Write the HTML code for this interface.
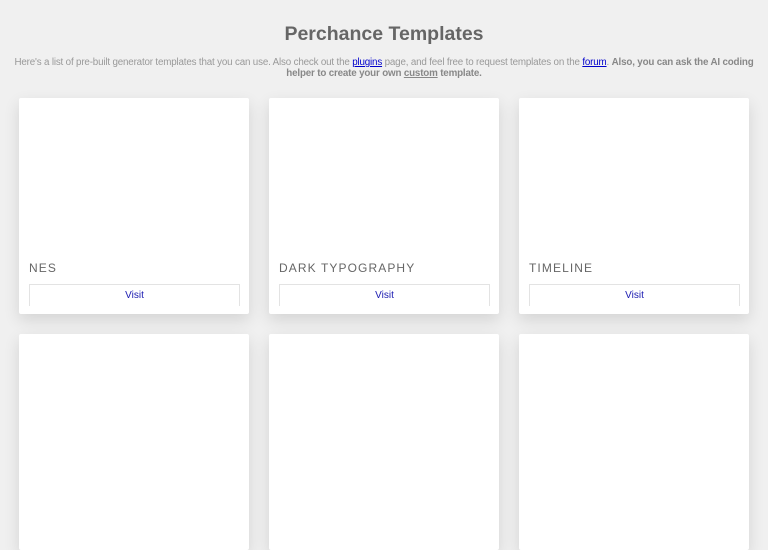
<!DOCTYPE html>
<html><head><style>
body{margin:0;background:#f0f0f0;font-family:"Liberation Sans",sans-serif;width:768px;height:480px;overflow:hidden;position:relative}
h1{position:absolute;top:22px;left:0;width:768px;text-align:center;margin:0;font-size:19.5px;font-weight:bold;color:#666;line-height:24px}
.intro{position:absolute;top:57px;left:0;width:768px;text-align:center;font-size:9.8px;line-height:11px;color:#999;letter-spacing:-0.17px;white-space:nowrap}
.intro b{color:#888}
.intro a{color:#00c;text-decoration:underline}
.intro u{color:#888}
.card{position:absolute;width:230px;height:216px;background:#fff;box-shadow:0 6px 16px rgba(0,0,0,0.12);border-radius:2px}
.t{position:absolute;left:10px;top:163px;font-size:12px;letter-spacing:1.1px;color:#666}
.btn{position:absolute;left:10px;top:186px;width:209px;height:21px;border:1px solid #e3e3e3;border-bottom:none;text-align:center;font-size:10px;line-height:21px;color:#1a1ab0}
</style></head><body>
<h1>Perchance Templates</h1>
<div class="intro">Here's a list of pre-built generator templates that you can use. Also check out the <a>plugins</a> page, and feel free to request templates on the <a>forum</a>. <b>Also, you can ask the AI coding<br>helper to create your own <u>custom</u> template.</b></div>
<div class="card" style="left:19px;top:98px"><div class="t">NES</div><div class="btn">Visit</div></div>
<div class="card" style="left:269px;top:98px"><div class="t">DARK TYPOGRAPHY</div><div class="btn">Visit</div></div>
<div class="card" style="left:519px;top:98px"><div class="t">TIMELINE</div><div class="btn">Visit</div></div>
<div class="card" style="left:19px;top:334px"></div>
<div class="card" style="left:269px;top:334px"></div>
<div class="card" style="left:519px;top:334px"></div>
</body></html>
